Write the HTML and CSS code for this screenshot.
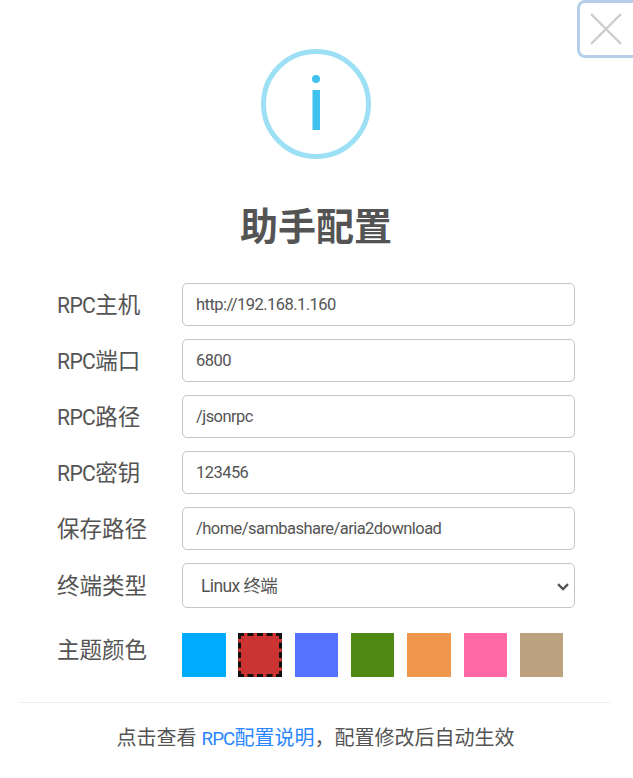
FILE: index.html
```html
<!DOCTYPE html>
<html lang="zh-CN">
<head>
<meta charset="utf-8">
<title>助手配置</title>
<link rel="stylesheet" href="styles.css">
</head>
<body>
<div class="modal">
  <button class="close" type="button" aria-label="关闭">
    <svg width="32" height="32" viewBox="0 0 32 32"><path d="M1 1 L31 31 M31 1 L1 31" fill="none" stroke="#ccc" stroke-width="2.4"/></svg>
  </button>
  <svg class="icon" width="110" height="110" viewBox="0 0 110 110">
    <circle cx="55" cy="55" r="52.5" fill="none" stroke="#9de0f6" stroke-width="5"/>
    <circle cx="55" cy="30" r="4" fill="#3fc3ee"/>
    <rect x="51.5" y="41" width="7.5" height="40" fill="#3fc3ee"/>
  </svg>
  <h2 class="title">助手配置</h2>
  <form class="form">
    <label class="row"><span class="label"><span class="latin">RPC</span>主机</span><input class="field" value="http://192.168.1.160"></label>
    <label class="row"><span class="label"><span class="latin">RPC</span>端口</span><input class="field" value="6800"></label>
    <label class="row"><span class="label"><span class="latin">RPC</span>路径</span><input class="field" value="/jsonrpc"></label>
    <label class="row"><span class="label"><span class="latin">RPC</span>密钥</span><input class="field" value="123456"></label>
    <label class="row"><span class="label">保存路径</span><input class="field" value="/home/sambashare/aria2download"></label>
    <label class="row row-select"><span class="label">终端类型</span>
      <select class="field select"><option>Linux 终端</option></select>
    </label>
    <div class="row themes">
      <span class="label">主题颜色</span>
      <div class="swatches">
        <span class="swatch blue"></span>
        <span class="swatch red"></span>
        <span class="swatch indigo"></span>
        <span class="swatch green"></span>
        <span class="swatch orange"></span>
        <span class="swatch pink"></span>
        <span class="swatch tan"></span>
      </div>
    </div>
  </form>
  <div class="footer">点击查看 <a href="#"><span class="latin">RPC</span>配置说明</a>，配置修改后自动生效</div>
</div>
</body>
</html>
```
FILE: styles.css
```css
html, body { margin: 0; padding: 0; background: #fff; }
body { font-family: Roboto, "Noto Sans CJK SC", sans-serif; color: #545454; overflow: hidden; }
.modal { position: relative; width: 633px; height: 778px; box-sizing: border-box; padding: 49px 22px 0 20px; overflow: hidden; }
.close { position: absolute; top: 3px; left: 580px; width: 60px; height: 52px; padding: 0 0 0 10px; border: 0; border-radius: 5px; background: #fff; box-shadow: 0 0 0 3px #b6cfe9; display: flex; align-items: center; }
.icon { display: block; margin: 0 0 0 241px; }
.title { margin: 43px 0 0; height: 50px; padding-left: 1px; font-size: 38px; line-height: 50px; font-weight: 700; text-align: center; color: #545454; }
.form { margin-top: 31px; padding: 0 0 0 37px; }
.row { display: flex; align-items: center; height: 43px; margin-bottom: 13px; }
.label { flex: 0 0 125px; font-size: 22.5px; line-height: 30px; color: #545454; }
.latin { font-size: 0.94em; line-height: 1; letter-spacing: -0.03em; }
.field { box-sizing: border-box; width: 393px; height: 43px; padding: 0 13px; border: 1px solid #c4c4c4; border-radius: 5px; background: #fff; font-family: inherit; font-size: 16.5px; letter-spacing: -0.55px; color: #545454; }
.select { height: 45px; padding: 0 18px; font-size: 17.5px; letter-spacing: -0.6px; appearance: none; background: #fff url("data:image/svg+xml,%3Csvg xmlns='http://www.w3.org/2000/svg' width='12' height='8' viewBox='0 0 12 8'%3E%3Cpath d='M1 1.2 L6 6 L11 1.2' fill='none' stroke='%23555' stroke-width='2.4'/%3E%3C/svg%3E") no-repeat 374px 19px; }
.row-select { height: 45px; margin-bottom: 25px; }
.themes { height: 44px; align-items: flex-start; }
.themes .label { padding-top: 2px; }
.swatches { display: flex; justify-content: space-between; width: 381.4px; }
.swatch { box-sizing: border-box; width: 43.5px; height: 44px; display: block; }
.blue { background: #0af; }
.red { background: #cc3333; border: 3px dashed #111; }
.indigo { background: #5472ff; }
.green { background: #508a15; }
.orange { background: #ee964b; }
.pink { background: #ff69a6; }
.tan { background: #bca280; }
.footer { margin-top: 25px; padding-top: 22px; border-top: 1px solid #eee; height: 40px; font-size: 20px; line-height: 27px; text-align: center; color: #545454; }
.footer a { color: #2b86ff; text-decoration: none; }
.footer .latin { letter-spacing: -0.05em; }
```
